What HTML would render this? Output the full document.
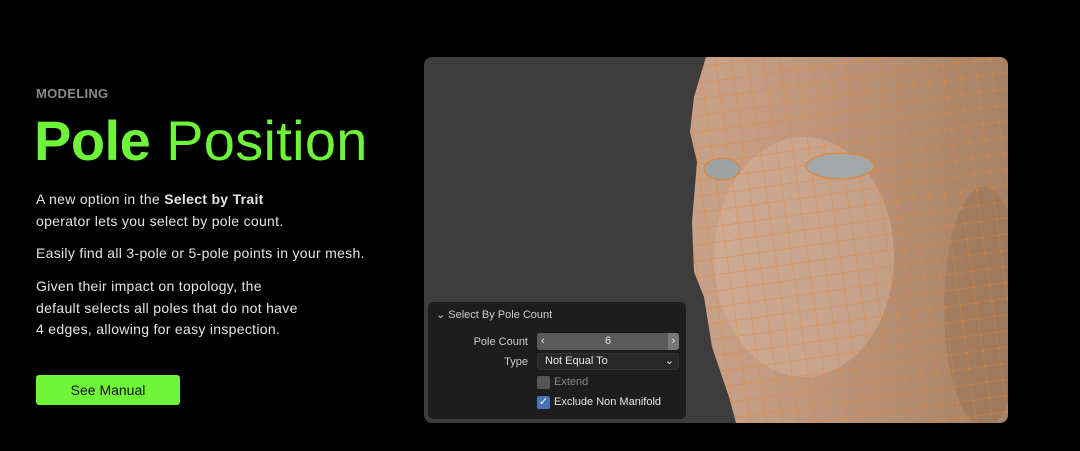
<!DOCTYPE html>
<html><head><meta charset="utf-8"><style>
*{margin:0;padding:0;box-sizing:border-box}
body{width:1080px;height:451px;background:#000;font-family:"Liberation Sans",sans-serif;position:relative;overflow:hidden;color:#e6e6e6}
.cat{position:absolute;left:36px;top:86px;font-size:13px;font-weight:bold;color:#8a8a8a;letter-spacing:.3px}
h1{position:absolute;left:34px;top:108px;font-size:56px;color:#6ef53a;font-weight:normal;letter-spacing:.3px;white-space:nowrap}
h1 b{font-weight:bold;letter-spacing:-.5px}
p{position:absolute;left:36px;font-size:14px;line-height:21.5px;color:#e4e4e4;letter-spacing:.3px;white-space:nowrap}
.btn{position:absolute;left:36px;top:375px;width:144px;height:30px;background:#6ef53a;border-radius:3px;color:#111;font-size:14px;text-align:center;line-height:30px}
.img{position:absolute;left:424px;top:57px;width:584px;height:366px;border-radius:8px;overflow:hidden;background:#3d3d3d}
.panel{position:absolute;left:4px;top:245px;width:258px;height:117px;background:#1d1d1d;border-radius:5px;font-size:11px;color:#ccc}
.panel div{position:absolute;white-space:nowrap}
</style></head><body>
<div class="cat">MODELING</div>
<h1><b>Pole</b> Position</h1>
<p style="top:189px">A new option in the <b>Select by Trait</b><br>operator lets you select by pole count.</p>
<p style="top:243px">Easily find all 3-pole or 5-pole points in your mesh.</p>
<p style="top:276px">Given their impact on topology, the<br>default selects all poles that do not have<br>4 edges, allowing for easy inspection.</p>
<div class="btn">See Manual</div>
<div class="img">
<svg width="584" height="366" style="position:absolute;left:0;top:0">
<defs>
<pattern id="g" width="16" height="16" patternUnits="userSpaceOnUse" patternTransform="rotate(-8)">
<path d="M0 0H16M0 0V16" stroke="#f08020" stroke-width=".9" fill="none"/>
<circle cx="0" cy="0" r="1.6" fill="#ff8a1a"/>
</pattern>
<linearGradient id="s" x1="0" y1="0" x2="1" y2="0">
<stop offset="0" stop-color="#c9a48c"/><stop offset=".5" stop-color="#c7a088"/><stop offset="1" stop-color="#a88266"/>
</linearGradient>
<clipPath id="f"><path d="M282 0 L270 40 L266 75 L273 105 L268 165 L270 215 L280 240 L288 290 L305 340 L312 366 L584 366 L584 0Z"/></clipPath>
</defs>
<g clip-path="url(#f)">
<rect width="584" height="366" fill="url(#s)"/>
<ellipse cx="380" cy="200" rx="90" ry="120" fill="#d4b6a2" opacity=".45"/>
<ellipse cx="560" cy="250" rx="40" ry="120" fill="#8c6a50" opacity=".35"/>
<rect width="584" height="366" fill="url(#g)" opacity=".75"/>
</g>
<ellipse cx="298" cy="112" rx="18" ry="11" fill="#9ea2a3" stroke="#f08020"/>
<ellipse cx="416" cy="109" rx="34" ry="13" fill="#a4a7a8" stroke="#f08020"/>
</svg>
<div class="panel">
<div style="left:8px;top:6px;font-size:11px">&#8964; Select By Pole Count</div>
<div style="left:30px;top:34px;width:70px;text-align:right">Pole Count</div>
<div style="left:109px;top:31px;width:142px;height:17px;background:#5a5a5a;border-radius:3px;text-align:center;line-height:17px;color:#e6e6e6">6<span style="position:absolute;left:4px">‹</span><span style="position:absolute;right:0;width:11px;background:#777;border-radius:0 3px 3px 0">›</span></div>
<div style="left:30px;top:54px;width:70px;text-align:right">Type</div>
<div style="left:109px;top:51px;width:142px;height:17px;background:#282828;border:1px solid #333;border-radius:3px;line-height:15px;padding-left:7px;color:#e6e6e6">Not Equal To<span style="position:absolute;right:4px">⌄</span></div>
<div style="left:109px;top:74px;width:13px;height:13px;background:#555;border-radius:2px"></div>
<div style="left:126px;top:74px;color:#888">Extend</div>
<div style="left:109px;top:94px;width:13px;height:13px;background:#4772b3;border-radius:2px;color:#fff;font-size:11px;line-height:13px;text-align:center">✓</div>
<div style="left:126px;top:94px;color:#e6e6e6">Exclude Non Manifold</div>
</div>
</div>
</body></html>
